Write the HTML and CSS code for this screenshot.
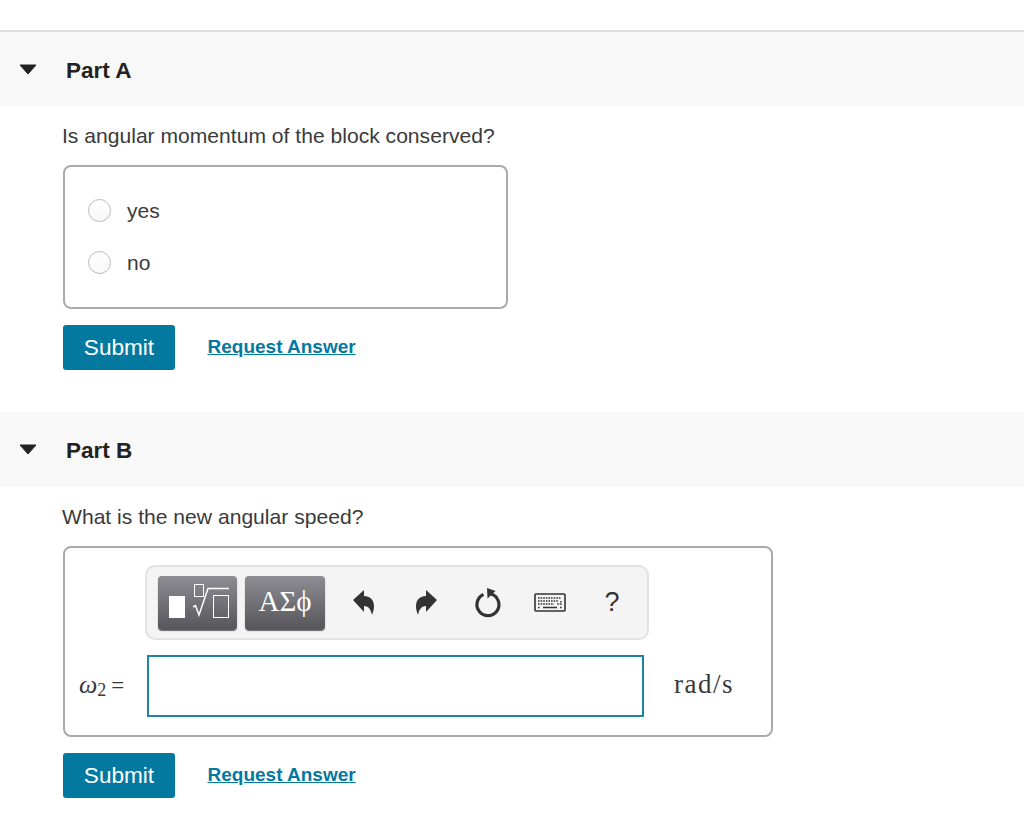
FILE: index.html
```html
<!DOCTYPE html>
<html>
<head>
<title>Parts</title>
<link rel="stylesheet" href="styles.css">
</head>
<body>

<div class="part part-first">
  <div class="part-head">
    <svg class="caret" width="18" height="11" viewBox="0 0 18 11"><path d="M1 1 H17 L9 10 Z" fill="#222" stroke="#222" stroke-linejoin="round"/></svg>
    <span class="part-title">Part A</span>
  </div>
  <div class="part-body">
    <p class="question">Is angular momentum of the block conserved?</p>
    <div class="box choices">
      <label class="choice"><span class="radio"></span>yes</label>
      <label class="choice"><span class="radio"></span>no</label>
    </div>
    <div class="actions">
      <a class="submit">Submit</a>
      <a class="request">Request Answer</a>
    </div>
  </div>
</div>

<div class="part part-second">
  <div class="part-head">
    <svg class="caret" width="18" height="11" viewBox="0 0 18 11"><path d="M1 1 H17 L9 10 Z" fill="#222" stroke="#222" stroke-linejoin="round"/></svg>
    <span class="part-title">Part B</span>
  </div>
  <div class="part-body">
    <p class="question">What is the new angular speed?</p>
    <div class="box answer">
      <div class="toolbar">
        <div class="tool-btn tool-templates">
          <svg width="79" height="54" viewBox="1 0 79 54">
            <rect x="12" y="20" width="16" height="22" fill="#fff"/>
            <rect x="37.5" y="8.5" width="9" height="12" fill="none" stroke="#fff"/>
            <path d="M36 31 L38.5 29.5 L42 39 L51 12.5 H72" fill="none" stroke="#fff" stroke-width="1.5"/>
            <rect x="56.5" y="19.5" width="15" height="22" fill="none" stroke="#fff"/>
          </svg>
        </div>
        <div class="tool-btn tool-greek">ΑΣϕ</div>
        <div class="tool-slot tool-first">
          <svg width="24" height="27" viewBox="0 0 24 27"><path d="M1 11 L12 1 V7 C20 7 25 14 20 26 C19 21 17 17 12 17 V23 Z" fill="#333"/></svg>
        </div>
        <div class="tool-slot">
          <svg width="24" height="27" viewBox="0 0 24 27"><path d="M23 11 L12 1 V7 C4 7 -1 14 4 26 C5 21 7 17 12 17 V23 Z" fill="#333"/></svg>
        </div>
        <div class="tool-slot">
          <svg width="28" height="32" viewBox="0 0 28 32"><path d="M9.5 7.5 A11 11 0 1 0 17 7" fill="none" stroke="#333" stroke-width="3.2"/><path d="M13 1 L21.5 4 L13.5 11.5 Z" fill="#333"/></svg>
        </div>
        <div class="tool-slot">
          <svg width="32" height="19" viewBox="0 0 32 19">
            <rect x="1" y="1" width="30" height="17" rx="1" fill="#f4f4f4" stroke="#333" stroke-width="1.6"/>
            <path d="M4 5 H27 M4 8 H24 M27 8 V11 H23 M4 11 H20 M4 14.5 H6 M26 14.5 H28" fill="none" stroke="#333" stroke-width="1.5" stroke-dasharray="1.6 1"/>
            <path d="M9 14.5 H23" stroke="#333" stroke-width="1.5"/>
          </svg>
        </div>
        <div class="tool-slot tool-help">?</div>
      </div>
      <div class="answer-row">
        <span class="math-label"><i>ω</i><sub>2</sub><span class="equals">=</span></span>
        <input class="answer-input" type="text">
        <span class="unit">rad/s</span>
      </div>
    </div>
    <div class="actions actions-low">
      <a class="submit">Submit</a>
      <a class="request">Request Answer</a>
    </div>
  </div>
</div>

</body>
</html>
```

FILE: styles.css
```css
body {
	margin: 0;
	background: #fff;
	color: #3a3a3a;
	font-family: "Liberation Sans", Arial, sans-serif;
}

.part-first { margin-top: 30px; border-top: 2px solid #ddd; }
.part-second { margin-top: 42px; }

.part-head {
	display: flex;
	align-items: center;
	height: 74px;
	padding-left: 19px;
	background: #f8f8f8;
	color: #222;
	font-size: 22.5px;
	font-weight: bold;
}
.part-second .part-head { height: 75px; }
.part-title { padding-top: 3px; }
.caret { margin-right: 29px; }

.part-body { padding-left: 63px; }

.question {
	margin: 0 0 0 -1px;
	padding-top: 15px;
	font-size: 21.1px;
	line-height: 30px;
}

.box {
	box-sizing: border-box;
	border: 2px solid #aaa;
	border-radius: 8px;
	background: #fff;
}

.choices {
	width: 445px;
	height: 144px;
	margin-top: 14px;
	padding-top: 17px;
}
.choice {
	display: flex;
	align-items: center;
	height: 52px;
	padding-left: 23px;
	padding-top: 2px;
	box-sizing: border-box;
	font-size: 21px;
}
.radio {
	box-sizing: border-box;
	width: 23px;
	height: 23px;
	margin-top: -2px;
	margin-right: 16px;
	border: 1.5px solid #bbb;
	border-radius: 50%;
	background: linear-gradient(#fff, #f8f8f8);
}

.actions {
	display: flex;
	align-items: center;
	margin-top: 16px;
}
.submit {
	width: 112px;
	height: 45px;
	line-height: 45px;
	border-radius: 3px;
	background: #04799f;
	color: #fff;
	font-size: 22.6px;
	text-align: center;
}
.request {
	margin-left: 32.5px;
	margin-top: -2px;
	color: #04799f;
	font-size: 19px;
	font-weight: bold;
	text-decoration: underline;
}

.answer {
	width: 710px;
	height: 191px;
	margin-top: 14px;
	padding-top: 17px;
}

.toolbar {
	box-sizing: border-box;
	display: flex;
	align-items: center;
	width: 504px;
	height: 75px;
	margin-left: 80px;
	padding-left: 11px;
	border: 2px solid #e2e2e2;
	border-radius: 10px;
	background: #f4f4f4;
}
.tool-btn {
	width: 80px;
	height: 54px;
	margin-right: 7px;
	border-radius: 4px;
	background: linear-gradient(#8e8d93, #55555a);
	box-shadow: 0 1px 1px #666;
}
.tool-btn svg { display: block; }
.tool-templates { width: 79px; margin-right: 8px; }
.tool-greek {
	color: #fff;
	font-family: "Liberation Serif", serif;
	font-size: 29px;
	line-height: 50px;
	text-align: center;
}
.tool-slot {
	display: flex;
	align-items: center;
	justify-content: center;
	width: 62px;
	height: 54px;
}
.tool-first { margin-left: 1px; }
.tool-help { font-size: 27px; color: #333; }

.answer-row {
	display: flex;
	align-items: center;
	margin-top: 15px;
	padding-left: 14px;
}
.math-label {
	display: flex;
	align-items: baseline;
	width: 68px;
	font-family: "Liberation Serif", serif;
	font-size: 26px;
	margin-top: -2px;
}
.math-label sub { font-size: 18px; vertical-align: baseline; position: relative; top: 3px; line-height: 1; }
.equals { font-size: 23px; margin-left: 5px; }
.answer-input {
	box-sizing: border-box;
	width: 497px;
	height: 62px;
	border: 2px solid #1f84a4;
	background: #fff;
	outline: none;
}
.unit {
	margin-left: 30px;
	margin-top: -3px;
	font-family: "Liberation Serif", serif;
	font-size: 27px;
	letter-spacing: 1.5px;
}
```
